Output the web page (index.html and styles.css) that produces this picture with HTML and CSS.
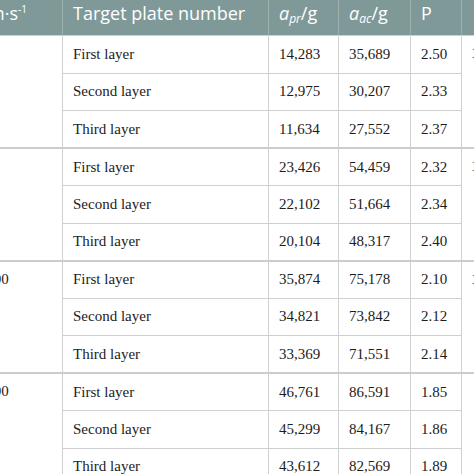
FILE: index.html
```html
<!DOCTYPE html>
<html lang="en">
<head>
<meta charset="utf-8">
<title>Target plate table</title>
<link rel="stylesheet" href="styles.css">
</head>
<body>
<div class="frame">
  <table class="data">
    <colgroup>
      <col class="w-speed">
      <col class="w-target">
      <col class="w-apr">
      <col class="w-aac">
      <col class="w-p">
      <col class="w-extra">
    </colgroup>
    <thead>
      <tr>
        <th class="speed">v/m·s<sup>-1</sup></th>
        <th>Target plate number</th>
        <th><i>a</i><sub><i>pr</i></sub>/g</th>
        <th><i>a</i><sub><i>ac</i></sub>/g</th>
        <th>P</th>
        <th class="extra">K</th>
      </tr>
    </thead>
    <tbody>
      <tr class="first">
        <td class="group" rowspan="3">800</td>
        <td>First layer</td><td>14,283</td><td>35,689</td><td>2.50</td>
        <td class="group tail" rowspan="3">1.40</td>
      </tr>
      <tr><td>Second layer</td><td>12,975</td><td>30,207</td><td>2.33</td></tr>
      <tr><td>Third layer</td><td>11,634</td><td>27,552</td><td>2.37</td></tr>

      <tr class="first">
        <td class="group" rowspan="3">900</td>
        <td>First layer</td><td>23,426</td><td>54,459</td><td>2.32</td>
        <td class="group tail" rowspan="3">1.36</td>
      </tr>
      <tr><td>Second layer</td><td>22,102</td><td>51,664</td><td>2.34</td></tr>
      <tr><td>Third layer</td><td>20,104</td><td>48,317</td><td>2.40</td></tr>

      <tr class="first">
        <td class="group" rowspan="3">1,000</td>
        <td>First layer</td><td>35,874</td><td>75,178</td><td>2.10</td>
        <td class="group tail" rowspan="3">1.19</td>
      </tr>
      <tr><td>Second layer</td><td>34,821</td><td>73,842</td><td>2.12</td></tr>
      <tr><td>Third layer</td><td>33,369</td><td>71,551</td><td>2.14</td></tr>

      <tr class="first">
        <td class="group" rowspan="3">1,100</td>
        <td>First layer</td><td>46,761</td><td>86,591</td><td>1.85</td>
        <td class="group tail" rowspan="3"></td>
      </tr>
      <tr><td>Second layer</td><td>45,299</td><td>84,167</td><td>1.86</td></tr>
      <tr><td>Third layer</td><td>43,612</td><td>82,569</td><td>1.89</td></tr>
    </tbody>
  </table>
</div>
</body>
</html>
```

FILE: styles.css
```css
html, body {
  margin: 0;
  padding: 0;
  background: #ffffff;
}

.frame {
  width: 474px;
  height: 474px;
  overflow: hidden;
}

.data {
  border-collapse: collapse;
  table-layout: fixed;
  width: 599px;
  margin-left: -37px;
  margin-top: -10px;
  font-family: "Liberation Serif", "Times New Roman", serif;
  font-size: 15px;
  color: #1c1c1c;
}

.w-speed { width: 99px; }
.w-target { width: 206px; }
.w-apr { width: 70px; }
.w-aac { width: 72px; }
.w-p { width: 51px; }
.w-extra { width: 101px; }

.data th {
  height: 45px;
  padding: 0 10px 0 10px;
  background: #7f9999;
  color: #ffffff;
  font-family: "Open Sans", "Noto Sans", sans-serif;
  font-weight: 400;
  font-size: 18px;
  text-align: left;
  vertical-align: middle;
  white-space: nowrap;
  border-right: 1px solid #9db1b1;
  border-bottom: 1px solid #c9d3d3;
}

.data th.speed { padding-left: 9px; }
.data th.extra { text-align: center; }

.data th sup {
  font-size: 10px;
  vertical-align: 7px;
  line-height: 0;
}

.data th sub {
  font-size: 12px;
  vertical-align: -3px;
  line-height: 0;
}

.data td {
  height: 37.5px;
  box-sizing: border-box;
  padding: 0 10px;
  text-align: left;
  vertical-align: middle;
  white-space: nowrap;
  border: 1px solid #d0d0d0;
}

.data td.group {
  vertical-align: top;
  padding-top: 9px;
  padding-left: 11px;
}

.data td.tail {
  padding-left: 9px;
}

.data tr.first td {
  border-top: 2px solid #cccccc;
}

.data tbody tr:first-child td {
  border-top: none;
}
```
